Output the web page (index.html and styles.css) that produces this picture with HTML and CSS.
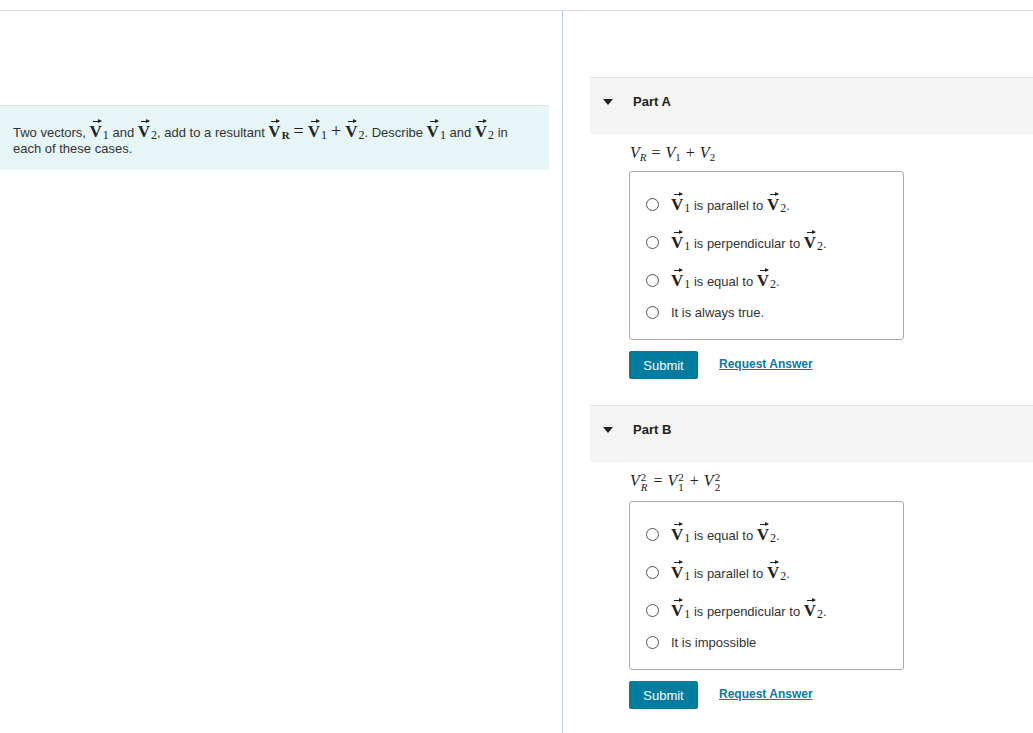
FILE: index.html
```
<!DOCTYPE html>
<html lang="en">
<head>
    <meta charset="UTF-8">
    <title>Vectors</title>
    <link rel="stylesheet" href="styles.css">
</head>
<body>
    <div class="page">
        <div class="left">
            <div class="prompt">
                Two vectors, <span class="vec">V<sub>1</sub></span> and <span class="vec">V<sub>2</sub></span>, add to a resultant <span class="vec">V<sub class="b">R</sub></span><span class="op">=</span><span class="vec">V<sub>1</sub></span><span class="op">+</span><span class="vec">V<sub>2</sub></span>. Describe <span class="vec">V<sub>1</sub></span> and <span class="vec">V<sub>2</sub></span> in<br>each of these cases.
            </div>
        </div>

        <div class="right">
            <div class="part">
                <div class="part-head"><span class="caret"></span>Part A</div>
                <div class="part-body">
                    <div class="formula"><i>V</i><sub><i>R</i></sub><span class="eq">=</span><i>V</i><sub>1</sub><span class="eq">+</span><i>V</i><sub>2</sub></div>
                    <div class="choices">
                        <label class="choice"><span class="radio"></span><span><span class="vec">V<sub>1</sub></span> is parallel to <span class="vec">V<sub>2</sub></span>.</span></label>
                        <label class="choice"><span class="radio"></span><span><span class="vec">V<sub>1</sub></span> is perpendicular to <span class="vec">V<sub>2</sub></span>.</span></label>
                        <label class="choice"><span class="radio"></span><span><span class="vec">V<sub>1</sub></span> is equal to <span class="vec">V<sub>2</sub></span>.</span></label>
                        <label class="choice plain"><span class="radio"></span><span>It is always true.</span></label>
                    </div>
                    <div class="actions">
                        <button class="submit">Submit</button>
                        <a href="#" class="request">Request Answer</a>
                    </div>
                </div>
            </div>

            <div class="part">
                <div class="part-head"><span class="caret"></span>Part B</div>
                <div class="part-body">
                    <div class="formula tall"><i>V</i><span class="supsub"><span>2</span><span><i>R</i></span></span><span class="eq">=</span><i>V</i><span class="supsub"><span>2</span><span>1</span></span><span class="eq">+</span><i>V</i><span class="supsub"><span>2</span><span>2</span></span></div>
                    <div class="choices">
                        <label class="choice"><span class="radio"></span><span><span class="vec">V<sub>1</sub></span> is equal to <span class="vec">V<sub>2</sub></span>.</span></label>
                        <label class="choice"><span class="radio"></span><span><span class="vec">V<sub>1</sub></span> is parallel to <span class="vec">V<sub>2</sub></span>.</span></label>
                        <label class="choice"><span class="radio"></span><span><span class="vec">V<sub>1</sub></span> is perpendicular to <span class="vec">V<sub>2</sub></span>.</span></label>
                        <label class="choice plain"><span class="radio"></span><span>It is impossible</span></label>
                    </div>
                    <div class="actions">
                        <button class="submit">Submit</button>
                        <a href="#" class="request">Request Answer</a>
                    </div>
                </div>
            </div>
        </div>
    </div>
</body>
</html>
```

FILE: styles.css
```
body {
    margin: 0;
    padding: 0;
    font-family: "Liberation Sans", Arial, sans-serif;
    font-size: 13px;
    color: #333;
    background: #fff;
}

.page {
    display: flex;
    margin-top: 10px;
    border-top: 1px solid #dedede;
    min-height: 722px;
}

.left {
    width: 562px;
    border-right: 1px solid #bccfe0;
}

.prompt {
    margin-top: 94px;
    width: 512px;
    padding: 17px 24px 13px 13px;
    background: #e6f5f6;
    border-top: 1px solid #dbe6ea;
    line-height: 16px;
    color: #333;
}

/* vector symbol: bold V with arrow above */
.vec {
    position: relative;
    display: inline-block;
    font-family: "Liberation Serif", "DejaVu Serif", serif;
    font-weight: bold;
    font-size: 17px;
    line-height: 14px;
    color: #222;
}

.vec::before {
    content: "";
    position: absolute;
    left: 3px;
    top: -4px;
    width: 8px;
    height: 1px;
    background: #222;
}

.vec::after {
    content: "";
    position: absolute;
    left: 8px;
    top: -6px;
    border-left: 4px solid #222;
    border-top: 2.5px solid transparent;
    border-bottom: 2.5px solid transparent;
}

.vec sub {
    font-size: 12px;
    font-weight: normal;
    vertical-align: -2px;
    line-height: 0;
    margin-left: 1px;
}

.vec sub.b {
    font-weight: bold;
    font-size: 11px;
}

.op {
    font-family: "Liberation Serif", serif;
    font-size: 18px;
    color: #222;
    margin: 0 4px;
}

.right {
    flex: 1;
    padding-left: 27px;
}

.part-head {
    margin-top: 66px;
    height: 40px;
    padding-top: 16px;
    background: #f5f5f5;
    border-top: 1px solid #e2e2e2;
    font-size: 13px;
    font-weight: bold;
    color: #222;
    display: flex;
    align-items: flex-start;
    padding-left: 13px;
}

.part + .part .part-head {
    margin-top: 26px;
}

.caret {
    width: 0;
    height: 0;
    margin-top: 5px;
    margin-right: 20px;
    border-top: 6px solid #222;
    border-left: 5px solid transparent;
    border-right: 5px solid transparent;
}

.part-body {
    padding-left: 39px;
}

.formula {
    font-family: "Liberation Serif", "DejaVu Serif", serif;
    font-size: 16px;
    line-height: 20px;
    color: #222;
    height: 22px;
    padding-top: 9px;
    margin-bottom: 6px;
    padding-left: 1px;
    white-space: nowrap;
}

.formula.tall {
    margin-bottom: 8px;
}

.formula sub {
    font-size: 11px;
    vertical-align: -3px;
    line-height: 0;
}

.eq {
    margin: 0 5px;
}

.supsub {
    display: inline-block;
    font-size: 11px;
    line-height: 10px;
    vertical-align: -5px;
    margin-left: 1px;
    margin-right: 1px;
    text-align: left;
}

.supsub span {
    display: block;
}

.choices {
    width: 273px;
    border: 1px solid #aaa;
    border-radius: 3px;
    padding: 13px 0 14px 0;
    display: flex;
    flex-direction: column;
}

.choice {
    display: flex;
    align-items: center;
    height: 38px;
    padding-left: 16px;
    padding-top: 2px;
    box-sizing: border-box;
    color: #333;
}

.choice.plain {
    height: 26px;
    padding-top: 0;
}

.radio {
    width: 11px;
    height: 11px;
    border: 1px solid #555;
    border-radius: 50%;
    margin-right: 12px;
    flex-shrink: 0;
    margin-top: -2px;
}

.choice.plain .radio {
    margin-top: 0;
}

.actions {
    display: flex;
    align-items: center;
    margin-top: 11px;
}

.submit {
    width: 69px;
    height: 28px;
    background: #007c9e;
    color: #fff;
    border: none;
    border-radius: 2px;
    font-family: "Liberation Sans", Arial, sans-serif;
    font-size: 13px;
    padding: 0;
    cursor: pointer;
}

.request {
    margin-left: 21px;
    margin-top: -2px;
    color: #0c7ba0;
    font-weight: bold;
    font-size: 12px;
    text-decoration: underline;
}
```
